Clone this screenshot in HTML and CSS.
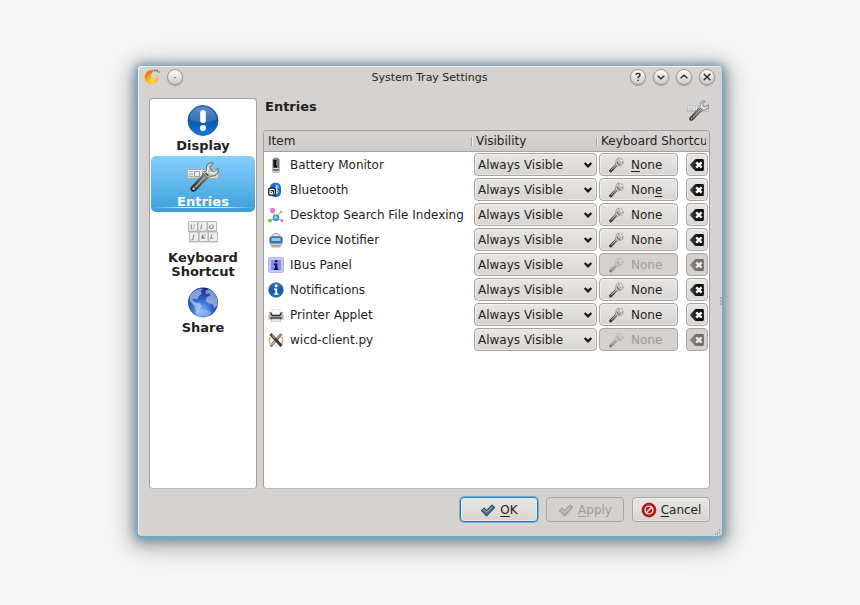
FILE: index.html
```html
<!DOCTYPE html>
<html lang="en">
<head>
<meta charset="utf-8">
<title>System Tray Settings</title>
<link rel="stylesheet" href="styles.css">
</head>
<body>
<svg class="defs" aria-hidden="true">
  <defs>
    <linearGradient id="blue" x1="0" y1="0" x2="0" y2="1">
      <stop offset="0" stop-color="#3c7cc4"/><stop offset=".5" stop-color="#0f57a8"/><stop offset="1" stop-color="#0a7be8"/>
    </linearGradient>
    <radialGradient id="globe" cx=".45" cy=".75" r=".75">
      <stop offset="0" stop-color="#7db4f4"/><stop offset=".5" stop-color="#2f62c4"/><stop offset="1" stop-color="#142a84"/>
    </radialGradient>
    <linearGradient id="panel" x1="0" y1="0" x2="0" y2="1">
      <stop offset="0" stop-color="#fcfcfc"/><stop offset="1" stop-color="#d0d0d0"/>
    </linearGradient>
    <radialGradient id="moon" cx=".6" cy=".8" r=".8">
      <stop offset="0" stop-color="#ffe93a"/><stop offset=".5" stop-color="#fdb11a"/><stop offset="1" stop-color="#ee6a10"/>
    </radialGradient>
    <linearGradient id="backing" x1="0" y1="0" x2="1" y2="0">
      <stop offset="0" stop-color="#555"/><stop offset=".5" stop-color="#111"/><stop offset="1" stop-color="#000"/>
    </linearGradient>
    <linearGradient id="handle" x1="1" y1="0" x2="0" y2="1">
      <stop offset="0" stop-color="#999"/><stop offset=".6" stop-color="#4a4a4a"/><stop offset="1" stop-color="#222"/>
    </linearGradient>
    <symbol id="wrench" viewBox="0 0 16 16">
      <path d="M1 13.500 7.800 6.400 10 8.500 3.200 15.400Q1.500 15.800 1 13.500Z" fill="url(#handle)"/>
      <path d="M3 13.200 8 8" stroke="#bbb" stroke-width=".9"/>
      <path d="M11.400 1C8.800 1.300 7.600 3 8 5.200L7.300 7 9.600 9.200 12 8.400C14.400 8.200 15.600 6.600 15.200 4.300L13.200 6 11.400 5.300 10.900 3.400Z" fill="#d6d6d6" stroke="#858585" stroke-width=".7"/>
      <path d="M13 1.300 14.600 3" stroke="#b5b5b5" stroke-width="1.300"/>
      <path d="M9.200 4.500 9.900 7 12.300 7.300" fill="none" stroke="#444" stroke-width=".9"/>
    </symbol>
    <symbol id="clear" viewBox="0 0 16 16">
      <path d="M.6 8 5.800 2.400Q6.300 1.900 7 1.900H13.400Q14.800 1.900 14.800 3.300V12.700Q14.800 14.100 13.400 14.100H7Q6.300 14.100 5.800 13.600Z" fill="url(#backing)"/>
      <path d="M7.200 5.300 12.600 10.700M12.600 5.300 7.200 10.700" stroke="#fff" stroke-width="2.500"/>
    </symbol>
    <symbol id="arrow" viewBox="0 0 10 8"><path d="M1.700 2 5 5.300 8.300 2" fill="none" stroke="#1c1818" stroke-width="2.300"/></symbol>
    <symbol id="check" viewBox="0 0 16 16">
      <path d="M1.500 8.600 4.200 6.200 6.500 8.600 12 3.200 14.600 5.500 6.600 13.800Z" fill="currentColor" stroke="var(--edge)" stroke-width="1.100" stroke-linejoin="round"/>
      <path d="M3.200 8.500 4.200 7.600 6.500 10.200 12 4.700" fill="none" stroke="#fff" stroke-opacity=".4"/>
    </symbol>
    <symbol id="tray" viewBox="0 0 32 32">
      <path d="M.5 9.500H31.500V18.500H.5Z" fill="url(#panel)" stroke="#aaa"/>
      <path d="M2.500 11.500h1M4.500 11.500h1M2.500 14h1M4.500 14h1M2.500 16.500h1M4.500 16.500h1" stroke="#777"/>
      <path d="M7.500 11.500h5v5h-5zM15.500 11.500h5v5h-5z" fill="#eee" stroke="#888" stroke-width=".8"/>
      <path d="M4.200 27 17 13.500 21.200 17.300 9 30.300Q6.500 32.500 4.500 31 2.800 29 4.200 27Z" fill="url(#handle)" stroke="#333" stroke-width=".6"/>
      <path d="M8.500 27 18.500 16.500" stroke="#aaa" stroke-width="1.600" stroke-linecap="round"/>
      <circle cx="6.600" cy="28.700" r="1.200" fill="#ccc"/>
      <path d="M26.500 3.200C22.500 1.800 18.800 4.200 19.500 8.300 19.800 10.500 18 12 16.300 13.500L20.800 18C22.500 16.300 24.500 16.300 27 15.800 30.500 15 32 12 31 8.300L27.500 11.500 24.200 10.500 23 7.200Z" fill="#c4c4c4" stroke="#555" stroke-width=".8"/>
      <path d="M21 7Q21 12.500 19 14M22.500 12.500 26.500 13.500 29.500 11.500" fill="none" stroke="#f4f4f4" stroke-width="1.300"/>
      <path d="M18.500 13 21.300 15.800" stroke="#333" stroke-width="1.400"/>
    </symbol>
  </defs>
</svg>

<main class="window">
  <header class="titlebar">
    <div class="title-side">
      <svg class="icon" viewBox="0 0 16 16" aria-hidden="true">
        <path d="M6 1.300C1 2.800-.7 8.500 2 12.300 5 16.500 12.500 16.500 14.300 10.200 14.500 8.500 13 8 12 9 10.500 10.300 8.300 9.800 7.300 8 6.300 5.600 8 3.600 9.300 2.400Z" fill="url(#moon)"/>
        <circle cx="8" cy="1.700" r=".9" fill="#9a7aa8"/><circle cx="10.500" cy="1.500" r="1.100" fill="#4a7fc0"/><circle cx="13" cy="1.700" r="1.100" fill="#c85a40"/><circle cx="15" cy="3" r=".9" fill="#58a060"/>
      </svg>
      <button class="round" aria-label="On all desktops"><svg viewBox="0 0 14 14"><path d="M6.500 7.500h1" stroke-width="1"/></svg></button>
    </div>
    <h1 class="title">System Tray Settings</h1>
    <div class="title-side title-end">
      <button class="round" aria-label="Help"><svg viewBox="0 0 16 16"><path d="M5.700 5.500C5.900 3.300 10.300 3.200 10.300 5.700 10.300 7.300 8 7.300 8 9.400M8 11v1.500"/></svg></button>
      <button class="round" aria-label="Minimize"><svg viewBox="0 0 16 16"><path d="M4.200 6.500 8 10 11.800 6.500"/></svg></button>
      <button class="round" aria-label="Maximize"><svg viewBox="0 0 16 16"><path d="M4.200 9.500 8 6 11.800 9.500"/></svg></button>
      <button class="round" aria-label="Close"><svg viewBox="0 0 16 16"><path d="M4.200 4.200 11.800 11.800M11.800 4.200 4.200 11.800"/></svg></button>
    </div>
  </header>

  <div class="body">
    <nav class="pages" aria-label="Pages">
      <a class="page" href="#display">
        <svg class="page-icon" viewBox="0 0 32 32" aria-hidden="true">
          <circle cx="16" cy="16.500" r="15" fill="url(#blue)" stroke="#1b4c8e" stroke-width=".8"/>
          <path d="M2.500 16C3 8 9 3 16 3s13 5 13.500 13Q16 20.500 2.500 16Z" fill="#fff" opacity=".16"/>
          <rect x="13.200" y="6" width="5.600" height="13" rx="2.800" fill="#fff"/><circle cx="16" cy="24" r="3" fill="#fff"/>
        </svg>
        <span>Display</span>
      </a>
      <a class="page selected" href="#entries" aria-current="page">
        <svg class="page-icon" aria-hidden="true"><use href="#tray"/></svg>
        <span>Entries</span>
      </a>
      <a class="page" href="#shortcut">
        <svg class="page-icon" viewBox="0 0 32 32" aria-hidden="true">
          <path d="M1 5.500H30V16H31V26.500H2V16H1Z" fill="#c4c4c4"/>
          <g fill="#f1f1f1" stroke="#aaa" stroke-width=".8">
            <rect x="1.500" y="5.500" width="9" height="9.500" rx="1"/><rect x="11" y="5.500" width="9" height="9.500" rx="1"/><rect x="20.500" y="5.500" width="9" height="9.500" rx="1"/>
            <rect x="2.500" y="16" width="9" height="9.500" rx="1"/><rect x="12" y="16" width="9" height="9.500" rx="1"/><rect x="21.500" y="16" width="9" height="9.500" rx="1"/>
          </g>
          <g class="keycaps"><text x="3" y="13">U</text><text x="13" y="13">I</text><text x="22" y="13">O</text><text x="5" y="23">J</text><text x="14" y="23">K</text><text x="23" y="23">L</text></g>
        </svg>
        <span>Keyboard<br>Shortcut</span>
      </a>
      <a class="page" href="#share">
        <svg class="page-icon" viewBox="0 0 32 32" aria-hidden="true">
          <circle cx="16" cy="16.500" r="15" fill="url(#globe)"/>
          <path d="M4 8 8 4.500 13 2.500 16 3 13.500 5.500 15 7.500 12 10 10 13.500 7 12.500 5.500 14 8.500 16.500 12.500 17 15 20 12.500 23.500 11.500 28 9 26 7.500 20 3.500 16 2.500 12ZM18.500 5 22 3 27 6.500 30 12 30.500 19 27.500 22 25.500 18 22 17.500 18.500 15 20 11 23.500 9.500 22 7.500 19 8Z" fill="#c5dcf8" opacity=".6"/>
          <ellipse cx="16" cy="27" rx="8" ry="3.500" fill="#a8d2ff" opacity=".5"/>
        </svg>
        <span>Share</span>
      </a>
    </nav>

    <section class="content">
      <div class="heading">
        <h2>Entries</h2>
        <svg class="heading-icon" aria-hidden="true"><use href="#tray"/></svg>
      </div>
      <div class="list">
        <table>
          <colgroup><col><col class="col-visibility"><col class="col-shortcut"></colgroup>
          <thead><tr><th scope="col">Item</th><th scope="col">Visibility</th><th scope="col"><div class="clip">Keyboard Shortcut</div></th></tr></thead>
          <tbody>
            <tr>
              <td><div class="item"><svg class="icon" viewBox="0 0 16 16" aria-hidden="true"><path d="M6 .8h4v2H6z" fill="#999"/><rect x="4.500" y="1.500" width="7" height="14" rx="1.200" fill="#777"/><path d="M5.500 3h3.500v7.500H5.500z" fill="#111"/><path d="M8.500 3.500v5" stroke="#398b63"/><path d="M4.800 11.500h6.400M4.800 14.500h6.400" stroke="#ccc"/></svg><span id="n1">Battery Monitor</span></div></td>
              <td><div class="combo"><select aria-labelledby="n1"><option>Always Visible</option></select><svg aria-hidden="true"><use href="#arrow"/></svg></div></td>
              <td><div class="keys"><button class="btn key"><svg class="icon" aria-hidden="true"><use href="#wrench"/></svg><span><u>N</u>one</span></button><button class="btn clear" aria-label="Clear"><svg class="icon"><use href="#clear"/></svg></button></div></td>
            </tr>
            <tr>
              <td><div class="item"><svg class="icon" viewBox="0 0 16 16" aria-hidden="true"><rect x="2" y=".8" width="11" height="14.500" rx="5" fill="#1a6fd4"/><path d="M6.500 5 10.500 9.500 8.500 12V3L10.500 5 7 8.500" fill="none" stroke="#cfe4ff"/><rect x=".8" y="6.200" width="6.500" height="7" rx="1" fill="#fff" stroke="#111" stroke-width="1.300"/><path d="M2.500 8.500h3v3.500M5 8.500 2.800 11" fill="none" stroke="#222"/></svg><span id="n2">Bluetooth</span></div></td>
              <td><div class="combo"><select aria-labelledby="n2"><option>Always Visible</option></select><svg aria-hidden="true"><use href="#arrow"/></svg></div></td>
              <td><div class="keys"><button class="btn key"><svg class="icon" aria-hidden="true"><use href="#wrench"/></svg><span>Non<u>e</u></span></button><button class="btn clear" aria-label="Clear"><svg class="icon"><use href="#clear"/></svg></button></div></td>
            </tr>
            <tr>
              <td><div class="item"><svg class="icon" viewBox="0 0 16 16" aria-hidden="true"><path d="M4.500 3.500 8 11 2 13.500M8 11 13 5M8 11 14 13" stroke="#aaa" fill="none"/><circle cx="4.500" cy="3.500" r="2.700" fill="#dc7bdc"/><circle cx="8" cy="10.700" r="3.200" fill="#2a9bd8"/><circle cx="7.800" cy="10.300" r="1.500" fill="#8bdcf8"/><circle cx="2" cy="13.500" r="1.900" fill="#75c843"/><circle cx="13" cy="5" r="1.500" fill="#bdb9a0"/><circle cx="14" cy="13.500" r="1.500" fill="#c88"/></svg><span id="n3">Desktop Search File Indexing</span></div></td>
              <td><div class="combo"><select aria-labelledby="n3"><option>Always Visible</option></select><svg aria-hidden="true"><use href="#arrow"/></svg></div></td>
              <td><div class="keys"><button class="btn key"><svg class="icon" aria-hidden="true"><use href="#wrench"/></svg><span>None</span></button><button class="btn clear" aria-label="Clear"><svg class="icon"><use href="#clear"/></svg></button></div></td>
            </tr>
            <tr>
              <td><div class="item"><svg class="icon" viewBox="0 0 16 16" aria-hidden="true"><path d="M4 5C4 0 12 0 12 5Z" fill="#e4e4e4" stroke="#999"/><rect x="1.500" y="4.500" width="13" height="7" rx="2.500" fill="#2877bd" stroke="#888" stroke-width=".8"/><path d="M3.500 6h9v3h-9z" fill="#8ccaf2"/><path d="M2 11.500H14L12 15H4Z" fill="#d8d8d8" stroke="#888" stroke-width=".7"/><path d="M4 13.500h8" stroke="#999"/></svg><span id="n4">Device Notifier</span></div></td>
              <td><div class="combo"><select aria-labelledby="n4"><option>Always Visible</option></select><svg aria-hidden="true"><use href="#arrow"/></svg></div></td>
              <td><div class="keys"><button class="btn key"><svg class="icon" aria-hidden="true"><use href="#wrench"/></svg><span>None</span></button><button class="btn clear" aria-label="Clear"><svg class="icon"><use href="#clear"/></svg></button></div></td>
            </tr>
            <tr>
              <td><div class="item"><svg class="icon" viewBox="0 0 16 16" aria-hidden="true"><rect x=".5" y=".5" width="15" height="15" rx="1" fill="#c3c5f8" stroke="#b4b7f2"/><path d="M3 3h10v10H3z" fill="#858af0"/><path d="M7 3.200h2.300v2H7zM6 6.500h3.300v5h1V13H5.800v-1.500H7V8H6z" fill="#0b0b38"/></svg><span id="n5">IBus Panel</span></div></td>
              <td><div class="combo"><select aria-labelledby="n5"><option>Always Visible</option></select><svg aria-hidden="true"><use href="#arrow"/></svg></div></td>
              <td><div class="keys"><button class="btn key" disabled><svg class="icon" aria-hidden="true"><use href="#wrench"/></svg><span>None</span></button><button class="btn clear" aria-label="Clear" disabled><svg class="icon"><use href="#clear"/></svg></button></div></td>
            </tr>
            <tr>
              <td><div class="item"><svg class="icon" viewBox="0 0 16 16" aria-hidden="true"><circle cx="8" cy="8" r="7.300" fill="url(#blue)" stroke="#1d4e8c" stroke-width=".6"/><circle cx="8.200" cy="4" r="1.400" fill="#fff"/><path d="M6 6.500h3.200v5h1.300v1.300H6v-1.300h1.200V8H6z" fill="#fff"/></svg><span id="n6">Notifications</span></div></td>
              <td><div class="combo"><select aria-labelledby="n6"><option>Always Visible</option></select><svg aria-hidden="true"><use href="#arrow"/></svg></div></td>
              <td><div class="keys"><button class="btn key"><svg class="icon" aria-hidden="true"><use href="#wrench"/></svg><span>None</span></button><button class="btn clear" aria-label="Clear"><svg class="icon"><use href="#clear"/></svg></button></div></td>
            </tr>
            <tr>
              <td><div class="item"><svg class="icon" viewBox="0 0 16 16" aria-hidden="true"><path d="M4 2.500h8v5H4z" fill="#f8f8f8" stroke="#ddd" stroke-width=".7"/><path d="M1 5H3L4 8H12L13 5H15L15.800 12.500H.2Z" fill="#b4b4b4"/><path d="M2.800 5.500 4.200 8.500h7.600l1.400-3" fill="none" stroke="#333" stroke-width="1.300"/><path d="M2.500 10.300h11v2.200h-11z" fill="#444"/><path d="M4 12h8l1 2.500H3z" fill="#eee" stroke="#bbb" stroke-width=".6"/></svg><span id="n7">Printer Applet</span></div></td>
              <td><div class="combo"><select aria-labelledby="n7"><option>Always Visible</option></select><svg aria-hidden="true"><use href="#arrow"/></svg></div></td>
              <td><div class="keys"><button class="btn key"><svg class="icon" aria-hidden="true"><use href="#wrench"/></svg><span>None</span></button><button class="btn clear" aria-label="Clear"><svg class="icon"><use href="#clear"/></svg></button></div></td>
            </tr>
            <tr>
              <td><div class="item"><svg class="icon" viewBox="0 0 16 16" aria-hidden="true"><path d="M2.500 5Q0 8 2.500 12M13.500 5Q16 8 13.500 12" fill="none" stroke="#f7b05c" stroke-width="1.600"/><path d="M2.500 14.500 13.500 2" stroke="#8a8a86" stroke-width="3"/><path d="M2.500 2 13.500 14" stroke="#3a3835" stroke-width="2.800"/><path d="M3.500 13 7 9.200M4 3.200 7 6.500" stroke="#c8c8c0"/></svg><span id="n8">wicd-client.py</span></div></td>
              <td><div class="combo"><select aria-labelledby="n8"><option>Always Visible</option></select><svg aria-hidden="true"><use href="#arrow"/></svg></div></td>
              <td><div class="keys"><button class="btn key" disabled><svg class="icon" aria-hidden="true"><use href="#wrench"/></svg><span>None</span></button><button class="btn clear" aria-label="Clear" disabled><svg class="icon"><use href="#clear"/></svg></button></div></td>
            </tr>
          </tbody>
        </table>
      </div>
    </section>
  </div>

  <footer class="actions">
    <button class="btn action default"><svg class="icon" aria-hidden="true"><use href="#check"/></svg><span><u>O</u>K</span></button>
    <button class="btn action" disabled><svg class="icon" aria-hidden="true"><use href="#check"/></svg><span><u>A</u>pply</span></button>
    <button class="btn action"><svg class="icon" viewBox="0 0 16 16" aria-hidden="true"><circle cx="8" cy="8" r="6.900" fill="#bf1414" stroke="#7c0f0f" stroke-width=".8"/><circle cx="8" cy="8" r="3.900" fill="none" stroke="#efe6e6" stroke-width="1.400"/><path d="M5 11 11 5" stroke="#efe6e6" stroke-width="1.500"/></svg><span><u>C</u>ancel</span></button>
  </footer>

  <svg class="grip-side" viewBox="0 0 2 9" aria-hidden="true"><path d="M0 1h2M0 4h2M0 7h2" stroke="#888"/></svg>
  <svg class="grip-corner" viewBox="0 0 6 6" aria-hidden="true"><path d="M4 1h1M4 4h1M2 3h1M0 5h1M2 5h1" stroke="#777"/></svg>
</main>
</body>
</html>
```
FILE: styles.css
```css
* { box-sizing: border-box; }

body {
  margin: 0;
  min-height: 100vh;
  padding: 66px 138px 69px;
  display: flex;
  background: #f7f7f7;
  color: #231f20;
  font: 12px/14px "DejaVu Sans", sans-serif;
}

.defs { position: absolute; width: 0; height: 0; }

h1, h2 { margin: 0; font-size: 13px; line-height: 15px; }

button, select { font: inherit; color: inherit; }

u { text-underline-offset: 2px; text-decoration-thickness: 1px; }

.icon { width: 16px; height: 16px; flex: none; }

.window {
  position: relative;
  flex: 1;
  min-width: 0;
  display: flex;
  flex-direction: column;
  padding: 0 12px 14px 11px;
  background: #d6d2cf;
  border-radius: 4px;
  box-shadow:
    inset 1px 1px #efedeb,
    0 1px 1px 1px #68abc9,
    0 1px 8px 2px #6f9bb0,
    0 4px 16px 5px rgba(80, 88, 100, .5),
    0 5px 34px 8px rgba(120, 125, 125, .25);
}

.titlebar {
  display: grid;
  grid-template-columns: 1fr auto 1fr;
  align-items: center;
  height: 22px;
  margin: 0 -5px 10px;
}

.title { font-size: 11px; font-weight: 400; }

.title-side { display: flex; align-items: center; gap: 7px; }

.title-end { justify-content: flex-end; }

.round {
  width: 16px;
  height: 16px;
  padding: 0;
  border: 1px solid #9a9693;
  border-radius: 50%;
  background: linear-gradient(#fbfbfa, #cfcbc8);
  box-shadow: 0 1px 1px #a09c99;
}

.round svg {
  display: block;
  width: 14px;
  height: 14px;
  fill: none;
  stroke: #2c2828;
  stroke-width: 1.6;
}

.body { flex: 1; display: flex; gap: 6px; min-height: 0; }

.pages, .list {
  background: #fff;
  border: 1px solid #a39f9c;
  border-bottom-color: #bbb7b4;
  border-radius: 4px;
}

.pages { width: 108px; padding: 1px; }

.page {
  display: flex;
  flex-direction: column;
  align-items: center;
  gap: 3px;
  padding: 4px 0 3px;
  border-radius: 5px;
  color: inherit;
  font-size: 13px;
  font-weight: 700;
  line-height: 14px;
  text-align: center;
  text-decoration: none;
}

.page.selected {
  background:
    linear-gradient(90deg, transparent, #cdeaff 30%, #cdeaff 70%, transparent) 0 51px / 100% 1px no-repeat,
    linear-gradient(#86cfff, #3a9fdc);
  color: #fff;
}

.page-icon { width: 32px; height: 32px; }

.keycaps { font: italic 400 6px "DejaVu Serif", serif; fill: #333; }

.content { flex: 1; min-width: 0; display: flex; flex-direction: column; }

.heading {
  display: flex;
  justify-content: space-between;
  height: 32px;
  padding: 1px 1px 0 2px;
}

.heading-icon { width: 22px; height: 22px; }

.list { flex: 1; overflow: hidden; }

table { width: 100%; table-layout: fixed; border-collapse: separate; border-spacing: 0; }

.col-visibility { width: 125px; }
.col-shortcut { width: 111px; }

th {
  height: 21px;
  padding: 0 3px 0 4px;
  background: linear-gradient(#d8d4d1, #cfcbc8);
  border-bottom: 1px solid #a89fa0;
  font-weight: 400;
  text-align: left;
}

th + th { padding-left: 3px; }

th:not(:last-child) {
  background:
    linear-gradient(#a5a19e, #a5a19e) right 1px center / 1px 9px no-repeat,
    linear-gradient(#f0eeec, #f0eeec) right center / 1px 9px no-repeat,
    linear-gradient(#d8d4d1, #cfcbc8);
}

.clip { overflow: hidden; white-space: nowrap; }

td { height: 25px; padding: 1px; }

.item { display: flex; align-items: center; gap: 6px; padding-left: 3px; white-space: nowrap; }

.combo { display: grid; align-items: center; }

.combo > * { grid-area: 1 / 1; }

.combo svg { width: 10px; height: 8px; justify-self: end; margin-right: 4px; pointer-events: none; }

select, .btn {
  height: 23px;
  border: 1px solid #a8a4a0;
  border-radius: 4px;
  background: linear-gradient(#e8e6e4, #d8d4d1);
  box-shadow: inset 0 0 0 1px rgba(255, 255, 255, .4);
}

select { appearance: none; width: 100%; padding: 0 3px; }

.btn { display: flex; align-items: center; justify-content: center; padding: 0; }

.btn:disabled { background: #d5d1ce; color: #9d9996; box-shadow: none; }

.btn:disabled .icon { opacity: .5; }

.keys { display: flex; justify-content: space-between; }

.key { width: 79px; justify-content: flex-start; gap: 7px; padding-left: 8px; }

.clear { width: 22px; }

.actions { display: flex; justify-content: flex-end; gap: 8px; padding-top: 8px; }

.action { width: 78px; height: 25px; gap: 4px; }

.action .icon { color: #527899; --edge: #2e4a63; }

.action:disabled .icon { color: #999; --edge: #666; }

.default { border-color: #2e78a8; box-shadow: 0 0 0 1px #6ab4e2, inset 0 0 0 1px #fff6; }

.grip-side { position: absolute; right: 0; top: 231px; width: 2px; height: 9px; }

.grip-corner { position: absolute; right: 1px; bottom: 1px; width: 6px; height: 6px; }
```
